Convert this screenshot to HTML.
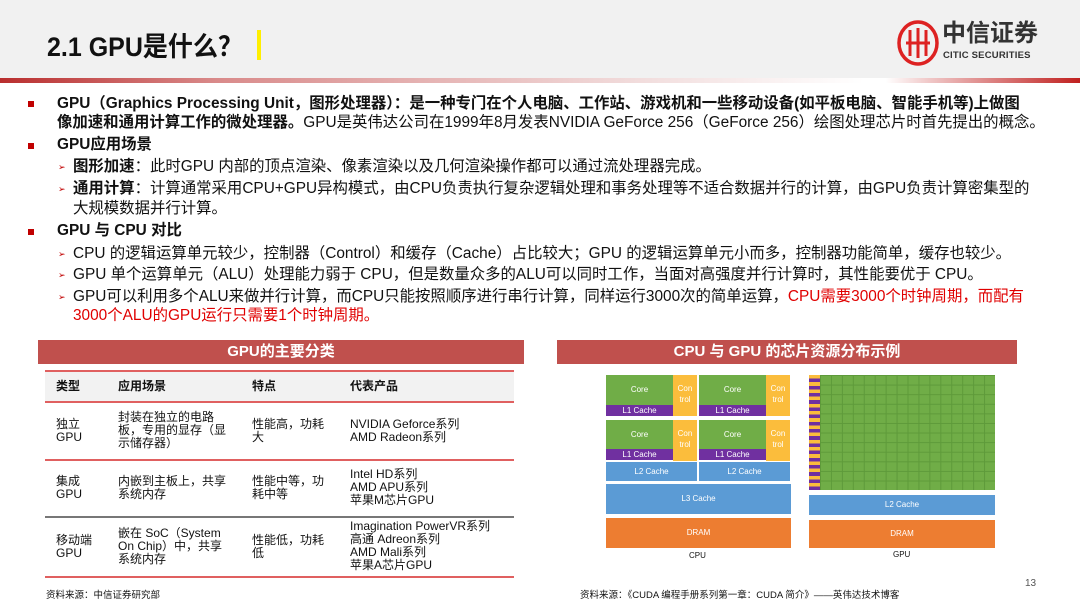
<!DOCTYPE html>
<html><head><meta charset="utf-8"><style>
*{margin:0;padding:0;box-sizing:border-box}
body{width:1080px;height:608px;position:relative;background:#fff;font-family:"Liberation Sans","Noto Sans CJK SC",sans-serif;color:#111;overflow:hidden}
.a{position:absolute;white-space:nowrap}
.hdr{position:absolute;left:0;top:0;width:1080px;height:78px;background:#f1f1f1}
.bar{position:absolute;left:0;top:78px;width:1080px;height:5px;background:linear-gradient(90deg,#b92e2e 0%,#d98a8a 20%,#f2dede 60%,#fff 80%,#fff 82%,#f0c8c8 86%,#c0201f 100%)}
.t{font-size:15.4px;line-height:18px}
.b{font-weight:bold}
.sq{position:absolute;width:6px;height:6px;background:#c00000}
.ar{position:absolute;font-size:9px;color:#c00000}
.red{color:#e00000}
.tb{position:absolute;background:#c0504d;color:#fff;font-weight:bold;font-size:15px;text-align:center;line-height:24px}
.cell{position:absolute;font-size:12px;line-height:13px}
.hl{position:absolute;height:2px;background:#e06060}
.blk{position:absolute;color:#fff;font-size:8px;text-align:center;font-family:"Liberation Sans",sans-serif}
.g{background:#70ad47}.o{background:#fbbd3c}.p{background:#7030a0}.bl{background:#5b9bd5}.dr{background:#ed7d31}
</style></head><body>
<div class="hdr"></div><div class="bar"></div>
<div class="a b" style="left:47px;top:26px;font-size:25px;color:#111;transform:scaleY(1.08);transform-origin:left top">2.1 GPU是什么？</div>
<div class="a" style="left:257px;top:30px;width:4px;height:30px;background:#ffef00"></div>
<svg class="a" style="left:896px;top:20px" width="44" height="46" viewBox="0 0 44 46"><ellipse cx="22" cy="23" rx="19" ry="21" fill="none" stroke="#d22" stroke-width="3.5"/><path d="M14 10v26M22 8v30M30 10v26M10 23h24" stroke="#d22" stroke-width="3" fill="none"/></svg>
<div class="a b" style="left:942px;top:19px;font-size:24px;line-height:30px;color:#333">中信证券</div>
<div class="a b" style="left:943px;top:50px;font-size:9.5px;line-height:11px;color:#333;letter-spacing:0.2px">CITIC SECURITIES</div>

<div class="sq" style="left:28px;top:101px"></div>
<div class="a t" style="left:57px;top:95px"><b>GPU（Graphics Processing Unit，图形处理器）：是一种专门在个人电脑、工作站、游戏机和一些移动设备(如平板电脑、智能手机等)上做图</b></div>
<div class="a t" style="left:57px;top:114px"><b>像加速和通用计算工作的微处理器。</b>GPU是英伟达公司在1999年8月发表NVIDIA GeForce 256（GeForce 256）绘图处理芯片时首先提出的概念。</div>
<div class="sq" style="left:28px;top:143px"></div>
<div class="a t b" style="left:57px;top:136px">GPU应用场景</div>
<div class="ar" style="left:58px;top:162px">➢</div>
<div class="a t" style="left:73px;top:158px"><b>图形加速</b>：此时GPU 内部的顶点渲染、像素渲染以及几何渲染操作都可以通过流处理器完成。</div>
<div class="ar" style="left:58px;top:184px">➢</div>
<div class="a t" style="left:73px;top:180px"><b>通用计算</b>：计算通常采用CPU+GPU异构模式，由CPU负责执行复杂逻辑处理和事务处理等不适合数据并行的计算，由GPU负责计算密集型的</div>
<div class="a t" style="left:73px;top:200px">大规模数据并行计算。</div>
<div class="sq" style="left:28px;top:229px"></div>
<div class="a t b" style="left:57px;top:222px">GPU 与 CPU 对比</div>
<div class="ar" style="left:58px;top:249px">➢</div>
<div class="a t" style="left:73px;top:245px">CPU 的逻辑运算单元较少，控制器（Control）和缓存（Cache）占比较大；GPU 的逻辑运算单元小而多，控制器功能简单，缓存也较少。</div>
<div class="ar" style="left:58px;top:270px">➢</div>
<div class="a t" style="left:73px;top:266px">GPU 单个运算单元（ALU）处理能力弱于 CPU，但是数量众多的ALU可以同时工作，当面对高强度并行计算时，其性能要优于 CPU。</div>
<div class="ar" style="left:58px;top:292px">➢</div>
<div class="a t" style="left:73px;top:288px">GPU可以利用多个ALU来做并行计算，而CPU只能按照顺序进行串行计算，同样运行3000次的简单运算，<span class="red">CPU需要3000个时钟周期，而配有</span></div>
<div class="a t red" style="left:73px;top:307px">3000个ALU的GPU运行只需要1个时钟周期。</div>

<div class="tb" style="left:38px;top:340px;width:486px">GPU的主要分类</div>
<div class="a" style="left:45px;top:371px;width:469px;height:31px;background:#f2f2f2"></div>
<div class="hl" style="left:45px;top:370px;width:469px"></div>
<div class="hl" style="left:45px;top:401px;width:469px"></div>
<div class="hl" style="left:45px;top:459px;width:469px"></div>
<div class="hl" style="left:45px;top:516px;width:469px;background:#777"></div>
<div class="hl" style="left:45px;top:576px;width:469px"></div>
<div class="cell b" style="left:56px;top:380px">类型</div>
<div class="cell b" style="left:118px;top:380px">应用场景</div>
<div class="cell b" style="left:252px;top:380px">特点</div>
<div class="cell b" style="left:350px;top:380px">代表产品</div>
<div class="cell" style="left:56px;top:418px">独立<br>GPU</div>
<div class="cell" style="left:118px;top:411px">封装在独立的电路<br>板，专用的显存（显<br>示储存器）</div>
<div class="cell" style="left:252px;top:418px">性能高，功耗<br>大</div>
<div class="cell" style="left:350px;top:418px">NVIDIA Geforce系列<br>AMD Radeon系列</div>
<div class="cell" style="left:56px;top:475px">集成<br>GPU</div>
<div class="cell" style="left:118px;top:475px">内嵌到主板上，共享<br>系统内存</div>
<div class="cell" style="left:252px;top:475px">性能中等，功<br>耗中等</div>
<div class="cell" style="left:350px;top:468px">Intel HD系列<br>AMD APU系列<br>苹果M芯片GPU</div>
<div class="cell" style="left:56px;top:534px">移动端<br>GPU</div>
<div class="cell" style="left:118px;top:527px">嵌在 SoC（System<br>On Chip）中，共享<br>系统内存</div>
<div class="cell" style="left:252px;top:534px">性能低，功耗<br>低</div>
<div class="cell" style="left:350px;top:520px">Imagination PowerVR系列<br>高通 Adreon系列<br>AMD Mali系列<br>苹果A芯片GPU</div>
<div class="a" style="left:46px;top:587px;font-size:9.5px">资料来源：中信证券研究部</div>

<div class="tb" style="left:557px;top:340px;width:460px">CPU 与 GPU 的芯片资源分布示例</div>
<div class="blk g" style="left:606px;top:375px;width:67px;height:30px;line-height:30px">Core</div>
<div class="blk p" style="left:606px;top:405px;width:67px;height:11px;line-height:11px">L1 Cache</div>
<div class="blk o" style="left:673px;top:375px;width:24px;height:41px;padding-top:8px;line-height:11px">Con<br>trol</div>
<div class="blk g" style="left:699px;top:375px;width:67px;height:30px;line-height:30px">Core</div>
<div class="blk p" style="left:699px;top:405px;width:67px;height:11px;line-height:11px">L1 Cache</div>
<div class="blk o" style="left:766px;top:375px;width:24px;height:41px;padding-top:8px;line-height:11px">Con<br>trol</div>
<div class="blk g" style="left:606px;top:420px;width:67px;height:29px;line-height:29px">Core</div>
<div class="blk p" style="left:606px;top:449px;width:67px;height:11px;line-height:11px">L1 Cache</div>
<div class="blk o" style="left:673px;top:420px;width:24px;height:41px;padding-top:8px;line-height:11px">Con<br>trol</div>
<div class="blk g" style="left:699px;top:420px;width:67px;height:29px;line-height:29px">Core</div>
<div class="blk p" style="left:699px;top:449px;width:67px;height:11px;line-height:11px">L1 Cache</div>
<div class="blk o" style="left:766px;top:420px;width:24px;height:41px;padding-top:8px;line-height:11px">Con<br>trol</div>
<div class="blk bl" style="left:606px;top:462px;width:91px;height:19px;line-height:19px">L2 Cache</div>
<div class="blk bl" style="left:699px;top:462px;width:91px;height:19px;line-height:19px">L2 Cache</div>
<div class="blk bl" style="left:606px;top:484px;width:185px;height:30px;line-height:30px">L3 Cache</div>
<div class="blk dr" style="left:606px;top:518px;width:185px;height:30px;line-height:30px">DRAM</div>
<div class="a" style="left:689px;top:551px;font-size:8px">CPU</div>
<div class="a" style="left:809px;top:375px;width:11px;height:115px;background:repeating-linear-gradient(180deg,#fbbd3c 0 3.6px,#7030a0 3.6px 7.2px)"></div>
<div class="a" style="left:820px;top:375px;width:175px;height:115px;background-color:#70ad47;background-image:linear-gradient(90deg,#5e9a3a 1px,transparent 1px),linear-gradient(180deg,#5e9a3a 1px,transparent 1px);background-size:10.95px 9.6px"></div>
<div class="blk bl" style="left:809px;top:495px;width:186px;height:20px;line-height:20px">L2 Cache</div>
<div class="blk dr" style="left:809px;top:520px;width:186px;height:28px;line-height:28px">DRAM</div>
<div class="a" style="left:893px;top:550px;font-size:8px">GPU</div>
<div class="a" style="left:580px;top:587px;font-size:9.5px">资料来源：《CUDA 编程手册系列第一章：CUDA 简介》——英伟达技术博客</div>
<div class="a" style="left:1025px;top:578px;font-size:10px;color:#555">13</div>
</body></html>
